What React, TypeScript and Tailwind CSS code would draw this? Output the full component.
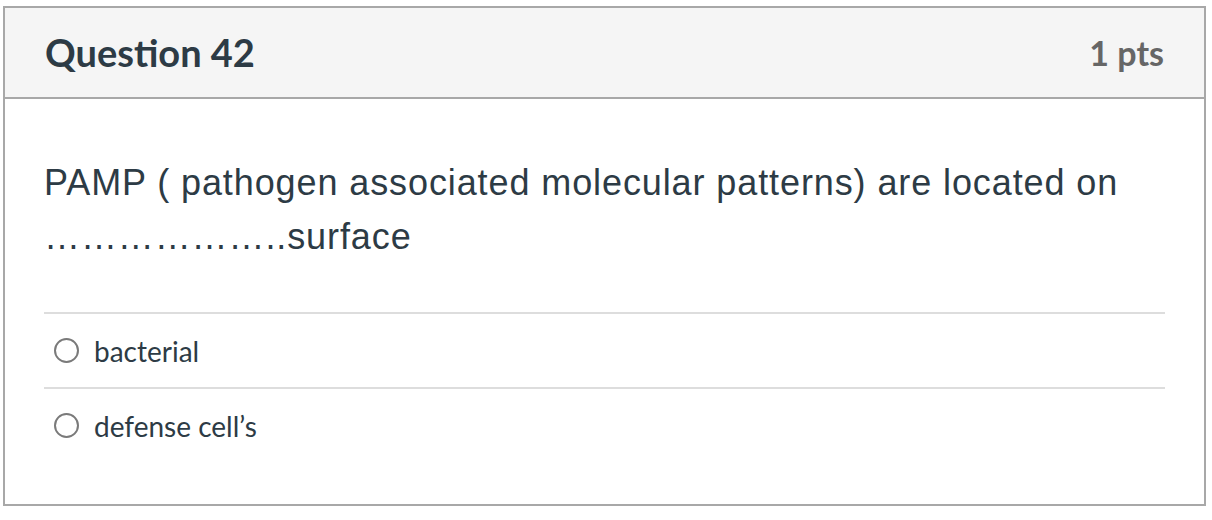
import React from "react";

const answers = ["bacterial", "defense cell’s"];

function Radio() {
  return (
    <span className="inline-block h-[25px] w-[25px] shrink-0 rounded-full border-2 border-[#7a7a7a] bg-white" />
  );
}

export default function App() {
  return (
    <div className="min-h-[520px] bg-white pl-[3px] pt-[6px]">
      <div className="flex h-[500px] w-[1203px] flex-col border-2 border-[#a8a8a8] bg-white">
        <div
          className="flex h-[91px] items-center justify-between border-b-2 border-[#a8a8a8] bg-[#f5f5f5] pl-[40px] pr-[40px]"
          style={{ fontFamily: "Lato, 'Open Sans', sans-serif" }}
        >
          <span className="text-[38px] font-bold text-[#2d3b45]">Question 42</span>
          <span className="text-[34px] font-bold text-[#666666]">1 pts</span>
        </div>

        <div className="flex flex-col px-[39px]">
          <p
            className="pt-[57px] text-[36px] leading-[54px] tracking-[0.9px] text-[#2d3b45]"
            style={{ fontFamily: "'Liberation Sans', Arial, sans-serif" }}
          >
            PAMP ( pathogen associated molecular patterns) are located on
            <br />
            ………………..surface
          </p>

          <div className="mt-[48px]" style={{ fontFamily: "Lato, 'Open Sans', sans-serif" }}>
            {answers.map((a) => (
              <div
                key={a}
                className="flex h-[75px] items-center gap-[15px] border-t-2 border-[#dddddd] pl-[10px] text-[28px] text-[#2d3b45]"
              >
                <Radio />
                <span>{a}</span>
              </div>
            ))}
          </div>
        </div>
      </div>
    </div>
  );
}
